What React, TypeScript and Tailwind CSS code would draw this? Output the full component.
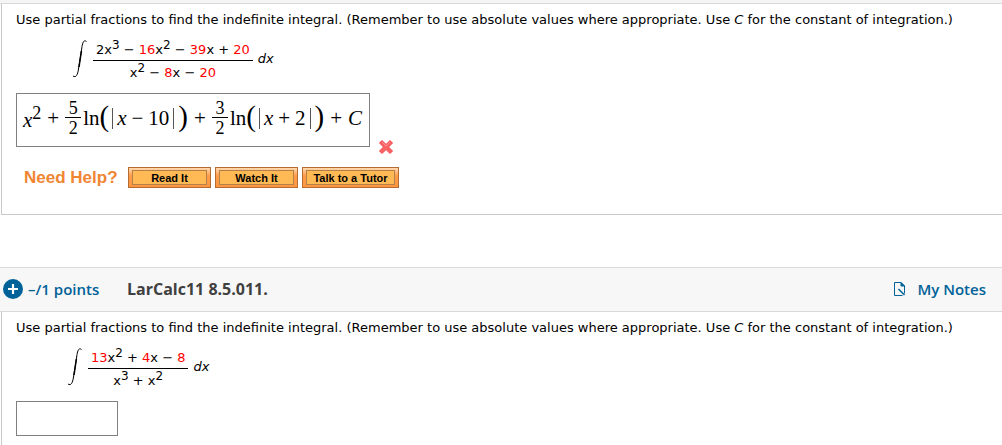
import React from 'react'

const Sup: React.FC<{ children: React.ReactNode }> = ({ children }) => (
  <span className="align-[5px] text-[12px] leading-none">{children}</span>
)

const Red: React.FC<{ children: React.ReactNode }> = ({ children }) => (
  <span className="text-[#ff0000]">{children}</span>
)

interface IntegralProps {
  top: React.ReactNode
  bottom: React.ReactNode
  className: string
}

const Integral: React.FC<IntegralProps> = ({ top, bottom, className }) => (
  <div className={`flex items-center text-[13px] ${className}`}>
    <svg width="17" height="40" viewBox="0 0 17 40" aria-label="integral" role="img">
      <path d="M14.500 2.500C12 .5 10.600 3 9.800 9L6.500 30C5.600 36 4 39 1 37" fill="none" stroke="#000" strokeWidth="1" />
      <path d="M9.400 12L7 28" fill="none" stroke="#000" strokeWidth="1.500" />
    </svg>
    <div className="ml-1 flex flex-col text-center whitespace-nowrap">
      <div className="h-[23px] border-b border-black px-[3px] leading-[24px]">{top}</div>
      <div className="h-[19px] leading-[24px]">{bottom}</div>
    </div>
    <i className="ml-[5px] leading-4">dx</i>
  </div>
)

const Prompt = () => (
  <p className="text-[13px] leading-4 whitespace-nowrap">
    Use partial fractions to find the indefinite integral. (Remember to use absolute values where
    appropriate. Use <i>C</i> for the constant of integration.)
  </p>
)

const Fraction: React.FC<{ top: string; bottom: string }> = ({ top, bottom }) => (
  <span className="mr-0.5 flex w-4 flex-col text-center text-[18px] leading-[20px]">
    <span className="h-[20px] border-b border-black">{top}</span>
    <span className="h-[20px]">{bottom}</span>
  </span>
)

const LogTerm: React.FC<{ sign: string; value: string }> = ({ sign, value }) => (
  <span className="flex items-center">
    <span>ln</span>
    <span className="pb-1 text-[29px] leading-7">(</span>
    <span className="mr-1 ml-[3px] h-[21px] w-px bg-[#555]" />
    <i>x</i>
    <span className="mx-[5px]">{sign}</span>
    <span>{value}</span>
    <span className="mx-1 h-[21px] w-px bg-[#555]" />
    <span className="pb-1 text-[29px] leading-7">)</span>
  </span>
)

const Answer = () => (
  <div className="flex h-[54px] w-[354px] items-center border border-[#808080] pb-1 pl-1.5 font-['Liberation_Serif',serif] text-[21px] leading-6 whitespace-nowrap">
    <span>
      <i>x</i>
      <span className="align-[8px] text-[18px] leading-none">2</span>
    </span>
    <span className="mx-1.5">+</span>
    <Fraction top="5" bottom="2" />
    <LogTerm sign="−" value="10" />
    <span className="mx-1.5">+</span>
    <Fraction top="3" bottom="2" />
    <LogTerm sign="+" value="2" />
    <span className="mx-1.5">+</span>
    <i>C</i>
  </div>
)

const HelpButton: React.FC<{ label: string; width: string }> = ({ label, width }) => (
  <button
    type="button"
    className={`h-[21px] border border-[#b56c33] bg-linear-to-b from-[#ffd9ae] via-[#ff9d4a] via-40% to-[#ff9540] px-[3px] py-[2px] ${width}`}
  >
    <span className="block h-[15px] border border-[#b5814a] bg-[#ffb955] text-center text-[11px] leading-[15px] font-bold whitespace-nowrap">
      {label}
    </span>
  </button>
)

export default function App() {
  return (
    <main className="overflow-hidden bg-white font-['DejaVu_Sans',sans-serif] text-black">
      <div className="h-1 border-b border-[#d9d9d9] bg-[#f5f5f5]" />
      <section className="ml-px h-[211px] border-b border-l border-[#c8c8c8] pt-2 pl-3.5">
        <Prompt />
        <Integral
          className="mt-2.5 ml-14"
          top={<>2x<Sup>3</Sup> − <Red>16</Red>x<Sup>2</Sup> − <Red>39</Red>x + <Red>20</Red></>}
          bottom={<>x<Sup>2</Sup> − <Red>8</Red>x − <Red>20</Red></>}
        />
        <div className="mt-[13px] flex items-end">
          <Answer />
          <svg className="-mb-2 ml-2 shrink-0" width="16" height="16" viewBox="0 0 16 16" role="img" aria-label="Incorrect">
            <path d="M4 1.500L8 5.500L12 1.500L14.500 4L10.500 8L14.500 12L12 14.500L8 10.500L4 14.500L1.500 12L5.500 8L1.500 4Z" fill="#fb6262" stroke="#ee4550" strokeLinejoin="round" />
            <path d="M4 3L8 7L12 3" fill="none" stroke="#ff9292" />
          </svg>
        </div>
        <div className="mt-5 ml-2 flex items-center font-['Liberation_Sans',sans-serif]">
          <span className="mr-2.5 w-[94px] text-[17px] leading-5 font-bold whitespace-nowrap text-[#f08532]">Need Help?</span>
          <div className="flex gap-1">
            <HelpButton label="Read It" width="w-[83px]" />
            <HelpButton label="Watch It" width="w-[83px]" />
            <HelpButton label="Talk to a Tutor" width="w-[97px]" />
          </div>
        </div>
      </section>

      <header className="mt-[52px] flex h-[45px] items-center border-y border-[#d9d9d9] bg-[#f7f7f7] pr-4 pb-px pl-[3px] font-['Open_Sans',sans-serif] text-[15px] leading-5 font-semibold">
        <button type="button" className="flex w-[124px] items-center gap-[5px] text-[#006298]">
          <svg width="20" height="20" viewBox="0 0 20 20" aria-hidden="true">
            <circle cx="10" cy="10" r="10" fill="#006298" />
            <path d="M10 5V15M5 10H15" stroke="#fff" strokeWidth="2.200" />
          </svg>
          –/1 points
        </button>
        <h2 className="text-[16px] font-bold text-[#404040]">LarCalc11 8.5.011.</h2>
        <a href="#notes" className="ml-auto flex items-center gap-3 text-[#006298]">
          <svg width="11" height="14" viewBox="0 0 11 14" fill="none" stroke="#006298" aria-hidden="true">
            <path d="M8.500 13.500H.5V.5H7L10.500 4V11.500" />
            <path d="M7 .5V4H10.500Z" fill="#006298" />
            <path d="M4.500 7L10.500 13" strokeWidth="1.500" />
          </svg>
          My Notes
        </a>
      </header>

      <section className="ml-px border-l border-[#c8c8c8] pt-2 pb-[9px] pl-3.5">
        <Prompt />
        <Integral
          className="mt-2.5 ml-[51px]"
          top={<><Red>13</Red>x<Sup>2</Sup> + <Red>4</Red>x − <Red>8</Red></>}
          bottom={<>x<Sup>3</Sup> + x<Sup>2</Sup></>}
        />
        <input type="text" aria-label="Answer" className="mt-[13px] block h-[35px] w-[102px] border border-[#808080] bg-white px-1" />
      </section>
    </main>
  )
}
